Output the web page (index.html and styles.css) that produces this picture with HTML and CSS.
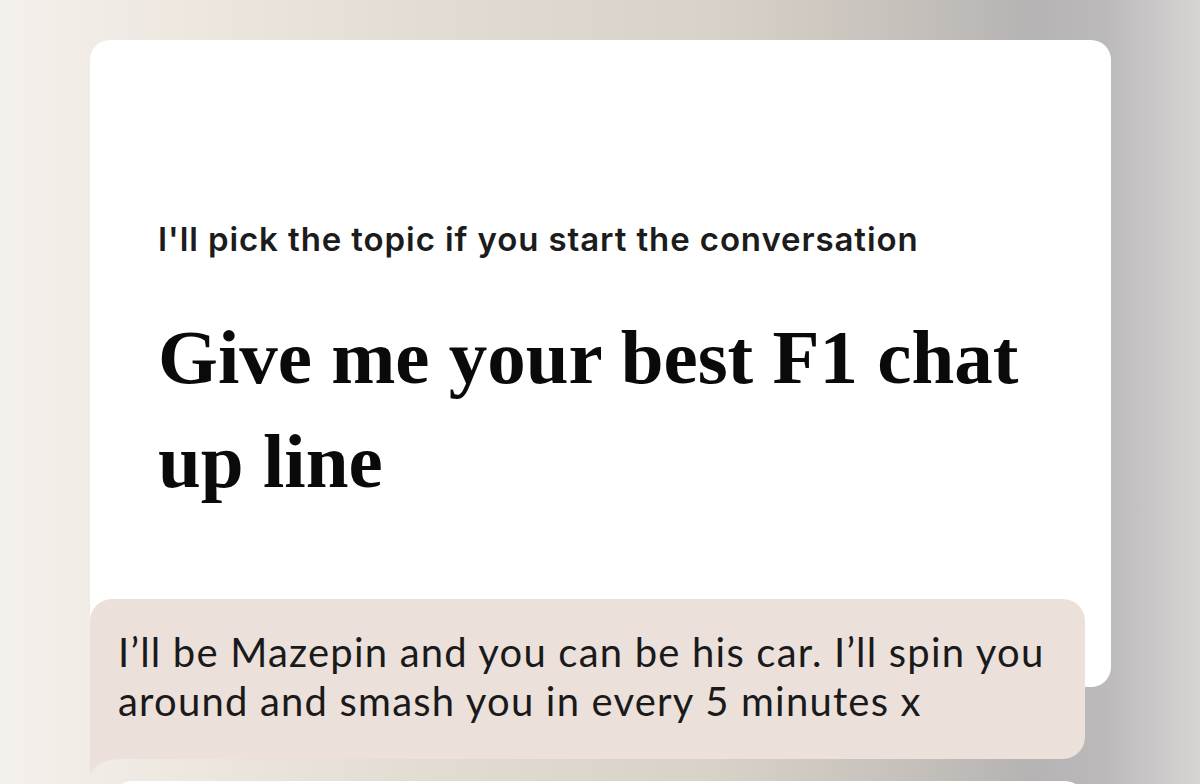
FILE: index.html
```html
<!DOCTYPE html>
<html lang="en">
<head>
<meta charset="utf-8">
<title>Prompt</title>
<link rel="stylesheet" href="styles.css">
</head>
<body>
<main class="screen">
  <section class="prompt-card">
    <p class="prompt-label">I'll pick the topic if you start the conversation</p>
    <h1 class="prompt-answer">Give me your best F1 chat up line</h1>
  </section>
  <div class="bubble">
    <p class="bubble-text">I’ll be Mazepin and you can be his car. I’ll spin you around and smash you in every 5 minutes x</p>
    <svg class="bubble-tail" width="32" height="16" viewBox="0 0 32 16" aria-hidden="true"><path d="M0 0 H32 C18 0 6 4 0 15 Z" fill="#ece0db"/></svg>
  </div>
  <section class="next-card"></section>
</main>
</body>
</html>
```

FILE: styles.css
```css
html, body {
  margin: 0;
  padding: 0;
}
body {
  width: 1200px;
  height: 784px;
  overflow: hidden;
  background: linear-gradient(to right, #f4f0eb 0%, #eee8e1 14%, #e2dcd3 35%, #d8d1c8 60%, #c6c1bb 75%, #b5b3b3 86%, #bbb9b9 92%, #d6d5d4 100%);
  font-family: Inter, "Open Sans", sans-serif;
}
.screen {
  display: flex;
  flex-direction: column;
  padding: 40px 0 0 90px;
}
.prompt-card {
  width: 1021px;
  height: 647px;
  box-sizing: border-box;
  background: #ffffff;
  border-radius: 20px;
  padding: 0 68px;
  display: flex;
  flex-direction: column;
}
.prompt-label {
  margin: 179px 0 0;
  font-family: Inter, sans-serif;
  font-weight: 600;
  font-size: 33px;
  line-height: 40px;
  letter-spacing: 0.9px;
  color: #1c1c1c;
}
.prompt-answer {
  margin: 46px 0 0;
  font-family: "Liberation Serif", serif;
  font-weight: 700;
  font-size: 77px;
  line-height: 104px;
  letter-spacing: 0;
  color: #0a0a0a;
}
.bubble {
  position: relative;
  width: 995px;
  box-sizing: border-box;
  margin-top: -88px;
  background: #ece0db;
  border-radius: 22px 22px 22px 0;
  padding: 29px 28px 33px;
}
.bubble-text {
  margin: 0;
  font-family: Lato, sans-serif;
  font-weight: 400;
  font-size: 40px;
  line-height: 49px;
  letter-spacing: 1.2px;
  color: #1a1a1a;
}
.bubble-tail {
  position: absolute;
  left: 0;
  top: 100%;
  display: block;
}
.next-card {
  width: 973px;
  height: 40px;
  margin: 22px 0 0 22px;
  background: #ffffff;
  border-radius: 20px 20px 0 0;
}
```
